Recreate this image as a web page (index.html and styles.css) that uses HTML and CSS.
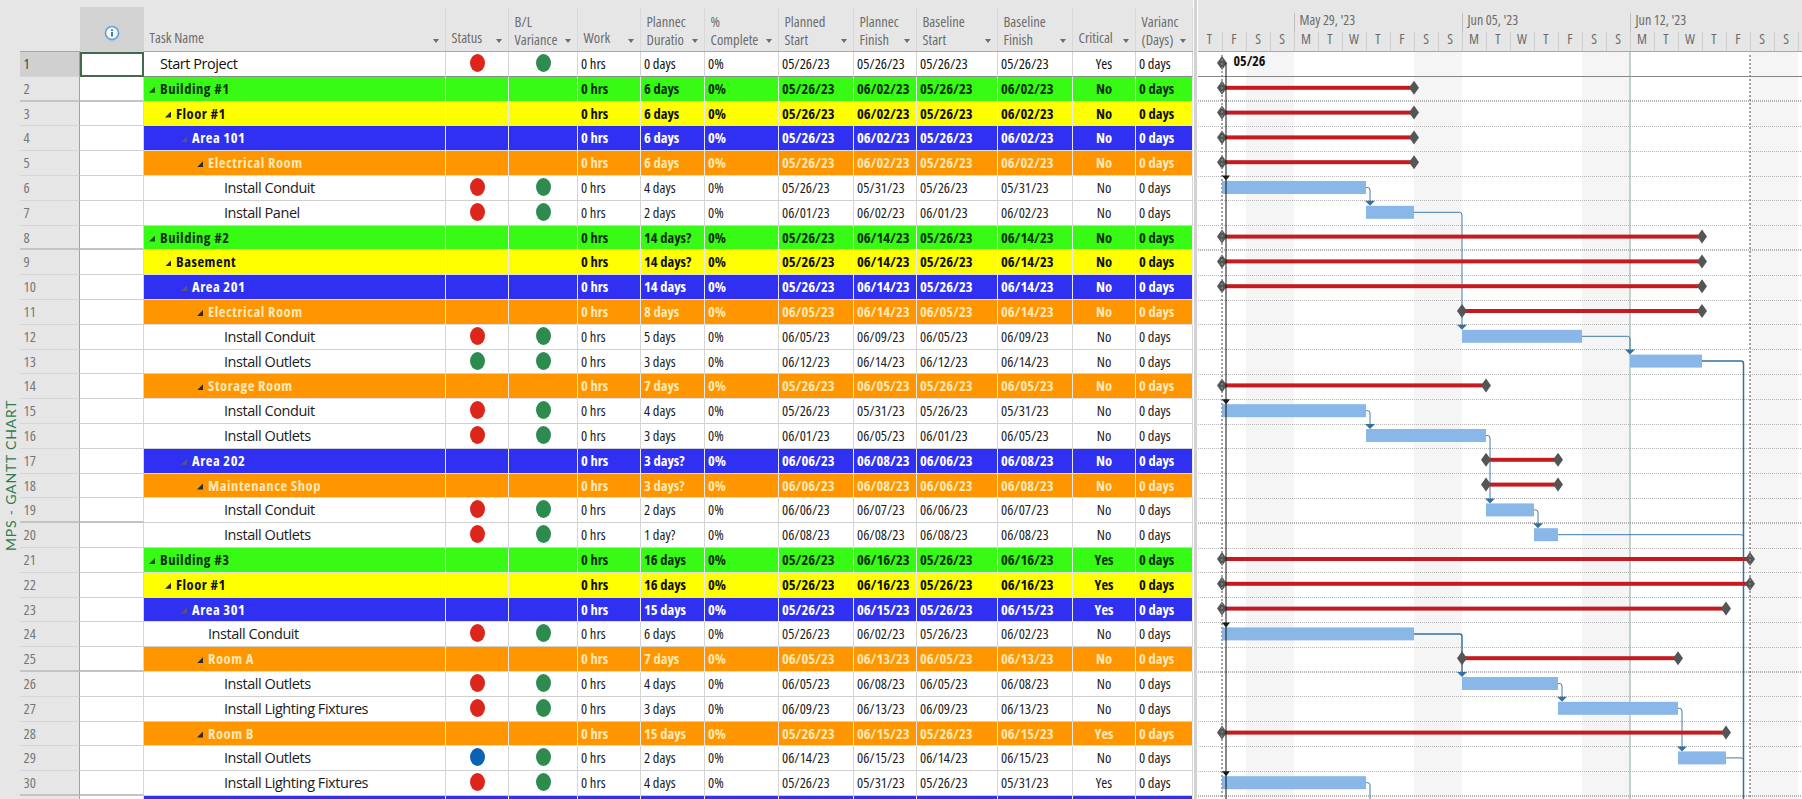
FILE: index.html
```html
<!DOCTYPE html>
<html lang="en">
<head>
<meta charset="utf-8">
<title>MPS - Gantt Chart</title>
<link rel="stylesheet" href="styles.css">
</head>
<body>
<div class="app">
  <div class="side"><span class="side-label">MPS - GANTT CHART</span></div>
  <div class="table">
    <div class="head">
      <div class="hid"></div>
      <div class="hind"><svg class="info" viewBox="0 0 16 18" width="16" height="18"><circle cx="8" cy="8" r="6.5" fill="#f4f9fd" stroke="#5fa3d8" stroke-width="1.6"/><rect x="7.1" y="7" width="1.8" height="4.5" fill="#3a6f9c"/><rect x="7.1" y="4.2" width="1.8" height="1.8" fill="#3a6f9c"/><rect x="5.5" y="15.4" width="5" height="1.2" fill="#9cc4e4"/></svg></div>
      <div class="hc one"><span>Task Name</span><i class="dd"></i></div>
      <div class="hc one"><span>Status</span><i class="dd"></i></div>
      <div class="hc"><span>B/L<br>Variance</span><i class="dd"></i></div>
      <div class="hc one"><span>Work</span><i class="dd"></i></div>
      <div class="hc"><span>Plannec<br>Duratio</span><i class="dd"></i></div>
      <div class="hc"><span>%<br>Complete</span><i class="dd"></i></div>
      <div class="hc"><span>Planned<br>Start</span><i class="dd"></i></div>
      <div class="hc"><span>Plannec<br>Finish</span><i class="dd"></i></div>
      <div class="hc"><span>Baseline<br>Start</span><i class="dd"></i></div>
      <div class="hc"><span>Baseline<br>Finish</span><i class="dd"></i></div>
      <div class="hc one"><span>Critical</span><i class="dd"></i></div>
      <div class="hc"><span>Varianc<br>(Days)</span><i class="dd"></i></div>
    </div>
    <div class="row first"><div class="id">1</div><div class="ind sel"></div><div class="task t1">Start Project</div><div class="dc"><i class="dot r"></i></div><div class="dc"><i class="dot g"></i></div><div>0 hrs</div><div>0 days</div><div>0%</div><div>05/26/23</div><div>05/26/23</div><div>05/26/23</div><div>05/26/23</div><div class="crit">Yes</div><div>0 days</div></div>
    <div class="row green thick"><div class="id">2</div><div class="ind"></div><div class="task s0"><i class="tw"></i>Building #1</div><div></div><div></div><div>0 hrs</div><div>6 days</div><div>0%</div><div>05/26/23</div><div>06/02/23</div><div>05/26/23</div><div>06/02/23</div><div class="crit">No</div><div>0 days</div></div>
    <div class="row yellow"><div class="id">3</div><div class="ind"></div><div class="task s1"><i class="tw"></i>Floor #1</div><div></div><div></div><div>0 hrs</div><div>6 days</div><div>0%</div><div>05/26/23</div><div>06/02/23</div><div>05/26/23</div><div>06/02/23</div><div class="crit">No</div><div>0 days</div></div>
    <div class="row blue"><div class="id">4</div><div class="ind"></div><div class="task s2"><i class="tw"></i>Area 101</div><div></div><div></div><div>0 hrs</div><div>6 days</div><div>0%</div><div>05/26/23</div><div>06/02/23</div><div>05/26/23</div><div>06/02/23</div><div class="crit">No</div><div>0 days</div></div>
    <div class="row orange"><div class="id">5</div><div class="ind"></div><div class="task s3"><i class="tw"></i>Electrical Room</div><div></div><div></div><div>0 hrs</div><div>6 days</div><div>0%</div><div>05/26/23</div><div>06/02/23</div><div>05/26/23</div><div>06/02/23</div><div class="crit">No</div><div>0 days</div></div>
    <div class="row"><div class="id">6</div><div class="ind"></div><div class="task t4">Install Conduit</div><div class="dc"><i class="dot r"></i></div><div class="dc"><i class="dot g"></i></div><div>0 hrs</div><div>4 days</div><div>0%</div><div>05/26/23</div><div>05/31/23</div><div>05/26/23</div><div>05/31/23</div><div class="crit">No</div><div>0 days</div></div>
    <div class="row"><div class="id">7</div><div class="ind"></div><div class="task t4">Install Panel</div><div class="dc"><i class="dot r"></i></div><div class="dc"><i class="dot g"></i></div><div>0 hrs</div><div>2 days</div><div>0%</div><div>06/01/23</div><div>06/02/23</div><div>06/01/23</div><div>06/02/23</div><div class="crit">No</div><div>0 days</div></div>
    <div class="row green thick"><div class="id">8</div><div class="ind"></div><div class="task s0"><i class="tw"></i>Building #2</div><div></div><div></div><div>0 hrs</div><div>14 days?</div><div>0%</div><div>05/26/23</div><div>06/14/23</div><div>05/26/23</div><div>06/14/23</div><div class="crit">No</div><div>0 days</div></div>
    <div class="row yellow"><div class="id">9</div><div class="ind"></div><div class="task s1"><i class="tw"></i>Basement</div><div></div><div></div><div>0 hrs</div><div>14 days?</div><div>0%</div><div>05/26/23</div><div>06/14/23</div><div>05/26/23</div><div>06/14/23</div><div class="crit">No</div><div>0 days</div></div>
    <div class="row blue"><div class="id">10</div><div class="ind"></div><div class="task s2"><i class="tw"></i>Area 201</div><div></div><div></div><div>0 hrs</div><div>14 days</div><div>0%</div><div>05/26/23</div><div>06/14/23</div><div>05/26/23</div><div>06/14/23</div><div class="crit">No</div><div>0 days</div></div>
    <div class="row orange"><div class="id">11</div><div class="ind"></div><div class="task s3"><i class="tw"></i>Electrical Room</div><div></div><div></div><div>0 hrs</div><div>8 days</div><div>0%</div><div>06/05/23</div><div>06/14/23</div><div>06/05/23</div><div>06/14/23</div><div class="crit">No</div><div>0 days</div></div>
    <div class="row"><div class="id">12</div><div class="ind"></div><div class="task t4">Install Conduit</div><div class="dc"><i class="dot r"></i></div><div class="dc"><i class="dot g"></i></div><div>0 hrs</div><div>5 days</div><div>0%</div><div>06/05/23</div><div>06/09/23</div><div>06/05/23</div><div>06/09/23</div><div class="crit">No</div><div>0 days</div></div>
    <div class="row"><div class="id">13</div><div class="ind"></div><div class="task t4">Install Outlets</div><div class="dc"><i class="dot g"></i></div><div class="dc"><i class="dot g"></i></div><div>0 hrs</div><div>3 days</div><div>0%</div><div>06/12/23</div><div>06/14/23</div><div>06/12/23</div><div>06/14/23</div><div class="crit">No</div><div>0 days</div></div>
    <div class="row orange"><div class="id">14</div><div class="ind"></div><div class="task s3"><i class="tw"></i>Storage Room</div><div></div><div></div><div>0 hrs</div><div>7 days</div><div>0%</div><div>05/26/23</div><div>06/05/23</div><div>05/26/23</div><div>06/05/23</div><div class="crit">No</div><div>0 days</div></div>
    <div class="row"><div class="id">15</div><div class="ind"></div><div class="task t4">Install Conduit</div><div class="dc"><i class="dot r"></i></div><div class="dc"><i class="dot g"></i></div><div>0 hrs</div><div>4 days</div><div>0%</div><div>05/26/23</div><div>05/31/23</div><div>05/26/23</div><div>05/31/23</div><div class="crit">No</div><div>0 days</div></div>
    <div class="row"><div class="id">16</div><div class="ind"></div><div class="task t4">Install Outlets</div><div class="dc"><i class="dot r"></i></div><div class="dc"><i class="dot g"></i></div><div>0 hrs</div><div>3 days</div><div>0%</div><div>06/01/23</div><div>06/05/23</div><div>06/01/23</div><div>06/05/23</div><div class="crit">No</div><div>0 days</div></div>
    <div class="row blue"><div class="id">17</div><div class="ind"></div><div class="task s2"><i class="tw"></i>Area 202</div><div></div><div></div><div>0 hrs</div><div>3 days?</div><div>0%</div><div>06/06/23</div><div>06/08/23</div><div>06/06/23</div><div>06/08/23</div><div class="crit">No</div><div>0 days</div></div>
    <div class="row orange"><div class="id">18</div><div class="ind"></div><div class="task s3"><i class="tw"></i>Maintenance Shop</div><div></div><div></div><div>0 hrs</div><div>3 days?</div><div>0%</div><div>06/06/23</div><div>06/08/23</div><div>06/06/23</div><div>06/08/23</div><div class="crit">No</div><div>0 days</div></div>
    <div class="row thick"><div class="id">19</div><div class="ind"></div><div class="task t4">Install Conduit</div><div class="dc"><i class="dot r"></i></div><div class="dc"><i class="dot g"></i></div><div>0 hrs</div><div>2 days</div><div>0%</div><div>06/06/23</div><div>06/07/23</div><div>06/06/23</div><div>06/07/23</div><div class="crit">No</div><div>0 days</div></div>
    <div class="row"><div class="id">20</div><div class="ind"></div><div class="task t4">Install Outlets</div><div class="dc"><i class="dot r"></i></div><div class="dc"><i class="dot g"></i></div><div>0 hrs</div><div>1 day?</div><div>0%</div><div>06/08/23</div><div>06/08/23</div><div>06/08/23</div><div>06/08/23</div><div class="crit">No</div><div>0 days</div></div>
    <div class="row green"><div class="id">21</div><div class="ind"></div><div class="task s0"><i class="tw"></i>Building #3</div><div></div><div></div><div>0 hrs</div><div>16 days</div><div>0%</div><div>05/26/23</div><div>06/16/23</div><div>05/26/23</div><div>06/16/23</div><div class="crit">Yes</div><div>0 days</div></div>
    <div class="row yellow"><div class="id">22</div><div class="ind"></div><div class="task s1"><i class="tw"></i>Floor #1</div><div></div><div></div><div>0 hrs</div><div>16 days</div><div>0%</div><div>05/26/23</div><div>06/16/23</div><div>05/26/23</div><div>06/16/23</div><div class="crit">Yes</div><div>0 days</div></div>
    <div class="row blue"><div class="id">23</div><div class="ind"></div><div class="task s2"><i class="tw"></i>Area 301</div><div></div><div></div><div>0 hrs</div><div>15 days</div><div>0%</div><div>05/26/23</div><div>06/15/23</div><div>05/26/23</div><div>06/15/23</div><div class="crit">Yes</div><div>0 days</div></div>
    <div class="row"><div class="id">24</div><div class="ind"></div><div class="task t3">Install Conduit</div><div class="dc"><i class="dot r"></i></div><div class="dc"><i class="dot g"></i></div><div>0 hrs</div><div>6 days</div><div>0%</div><div>05/26/23</div><div>06/02/23</div><div>05/26/23</div><div>06/02/23</div><div class="crit">No</div><div>0 days</div></div>
    <div class="row orange thick"><div class="id">25</div><div class="ind"></div><div class="task s3"><i class="tw"></i>Room A</div><div></div><div></div><div>0 hrs</div><div>7 days</div><div>0%</div><div>06/05/23</div><div>06/13/23</div><div>06/05/23</div><div>06/13/23</div><div class="crit">No</div><div>0 days</div></div>
    <div class="row"><div class="id">26</div><div class="ind"></div><div class="task t4">Install Outlets</div><div class="dc"><i class="dot r"></i></div><div class="dc"><i class="dot g"></i></div><div>0 hrs</div><div>4 days</div><div>0%</div><div>06/05/23</div><div>06/08/23</div><div>06/05/23</div><div>06/08/23</div><div class="crit">No</div><div>0 days</div></div>
    <div class="row"><div class="id">27</div><div class="ind"></div><div class="task t4">Install Lighting Fixtures</div><div class="dc"><i class="dot r"></i></div><div class="dc"><i class="dot g"></i></div><div>0 hrs</div><div>3 days</div><div>0%</div><div>06/09/23</div><div>06/13/23</div><div>06/09/23</div><div>06/13/23</div><div class="crit">No</div><div>0 days</div></div>
    <div class="row orange"><div class="id">28</div><div class="ind"></div><div class="task s3"><i class="tw"></i>Room B</div><div></div><div></div><div>0 hrs</div><div>15 days</div><div>0%</div><div>05/26/23</div><div>06/15/23</div><div>05/26/23</div><div>06/15/23</div><div class="crit">Yes</div><div>0 days</div></div>
    <div class="row"><div class="id">29</div><div class="ind"></div><div class="task t4">Install Outlets</div><div class="dc"><i class="dot b"></i></div><div class="dc"><i class="dot g"></i></div><div>0 hrs</div><div>2 days</div><div>0%</div><div>06/14/23</div><div>06/15/23</div><div>06/14/23</div><div>06/15/23</div><div class="crit">No</div><div>0 days</div></div>
    <div class="row thick"><div class="id">30</div><div class="ind"></div><div class="task t4">Install Lighting Fixtures</div><div class="dc"><i class="dot r"></i></div><div class="dc"><i class="dot g"></i></div><div>0 hrs</div><div>4 days</div><div>0%</div><div>05/26/23</div><div>05/31/23</div><div>05/26/23</div><div>05/31/23</div><div class="crit">Yes</div><div>0 days</div></div>
    <div class="row blue"><div class="id"></div><div class="ind"></div><div class="task"></div><div></div><div></div><div></div><div></div><div></div><div></div><div></div><div></div><div></div><div></div><div></div></div>
  </div>
  <div class="split"></div>
  <div class="chart">
    <div class="chead">
      <div class="weeks"><div class="wk lead"></div><div class="wk">May 29, '23</div><div class="wk">Jun 05, '23</div><div class="wk">Jun 12, '23</div></div>
      <div class="days"><span>T</span><span>F</span><span>S</span><span>S</span><span>M</span><span>T</span><span>W</span><span>T</span><span>F</span><span>S</span><span>S</span><span>M</span><span>T</span><span>W</span><span>T</span><span>F</span><span>S</span><span>S</span><span>M</span><span>T</span><span>W</span><span>T</span><span>F</span><span>S</span><span>S</span><span></span></div>
    </div>
    <svg class="plot" viewBox="1197.5 52 604.5 747" width="604.5" height="747">
      <defs>
        <polygon id="dia" points="0,-7 5,0 0,7 -5,0"/>
        <polygon id="arr" points="-5,-5 5,-5 0,0"/>
        <polygon id="blk" points="-4,-5 4,-5 0,0"/>
      </defs>
      <rect class="wkend" x="1245.5" y="52" width="48" height="747"/>
      <rect class="wkend" x="1413.5" y="52" width="48" height="747"/>
      <rect class="wkend" x="1581.5" y="52" width="48" height="747"/>
      <rect class="wkend" x="1749.5" y="52" width="48" height="747"/>
      <path class="grid" d="M1197.5 126.5H1802M1197.5 151.5H1802M1197.5 176.5H1802M1197.5 200.5H1802M1197.5 225.5H1802M1197.5 275.5H1802M1197.5 300.5H1802M1197.5 324.5H1802M1197.5 349.5H1802M1197.5 374.5H1802M1197.5 399.5H1802M1197.5 424.5H1802M1197.5 448.5H1802M1197.5 473.5H1802M1197.5 498.5H1802M1197.5 548.5H1802M1197.5 572.5H1802M1197.5 597.5H1802M1197.5 622.5H1802M1197.5 647.5H1802M1197.5 696.5H1802M1197.5 721.5H1802M1197.5 746.5H1802M1197.5 771.5H1802"/>
      <path class="grid heavy" d="M1197.5 101H1802M1197.5 250H1802M1197.5 523H1802M1197.5 672H1802M1197.5 796H1802"/>
      <path class="rule" d="M1197.5 76.5H1802"/>
      <path class="today" d="M1629.5 52V799"/>
      <path class="dots" d="M1221.5 55V799M1749.5 55V799"/>
      <g class="links">
        <path d="M1365.5 187.5H1367Q1369.5 187.5 1369.5 190V201"/>
        <path d="M1413.5 212.3H1459Q1461.5 212.3 1461.5 215V325"/>
        <path d="M1581.5 336.3H1627Q1629.5 336.3 1629.5 339V350"/>
        <path class="strong" d="M1701.5 361.1H1740.5Q1743 361.1 1743 363.5V799"/>
        <path d="M1365.5 410.7H1367Q1369.5 410.7 1369.5 413V425"/>
        <path d="M1485.5 435.5H1487Q1489.5 435.5 1489.5 438V499"/>
        <path d="M1533.5 509.9H1535Q1537.5 509.9 1537.5 512.5V524"/>
        <path d="M1557.5 534.7H1740.5Q1743 534.7 1743 537"/>
        <path class="strong" d="M1413.5 633.9H1459Q1461.5 633.9 1461.5 636.5V673"/>
        <path d="M1557.5 683.5H1559Q1561.5 683.5 1561.5 686V698"/>
        <path d="M1677.5 708.3H1679Q1681.5 708.3 1681.5 711V747"/>
        <path d="M1725.5 757.9H1740.5Q1743 757.9 1743 760"/>
        <path d="M1365.5 782.7H1367Q1369.5 782.7 1369.5 785V799"/>
      </g>
      <g class="arrows">
        <use href="#arr" x="1369.5" y="205.8"/><use href="#arr" x="1461.5" y="329.8"/><use href="#arr" x="1629.5" y="354.6"/><use href="#arr" x="1369.5" y="429"/><use href="#arr" x="1489.5" y="503.4"/><use href="#arr" x="1537.5" y="528.2"/><use href="#arr" x="1461.5" y="677"/><use href="#arr" x="1561.5" y="701.8"/><use href="#arr" x="1681.5" y="751.4"/>
      </g>
      <g class="bars">
        <rect x="1221.5" y="181" width="144" height="13"/><rect x="1365.5" y="205.8" width="48" height="13"/><rect x="1461.5" y="329.8" width="120" height="13"/><rect x="1629.5" y="354.6" width="72" height="13"/><rect x="1221.5" y="404.2" width="144" height="13"/><rect x="1365.5" y="429" width="120" height="13"/><rect x="1485.5" y="503.4" width="48" height="13"/><rect x="1533.5" y="528.2" width="24" height="13"/><rect x="1221.5" y="627.4" width="192" height="13"/><rect x="1461.5" y="677" width="96" height="13"/><rect x="1557.5" y="701.8" width="120" height="13"/><rect x="1677.5" y="751.4" width="48" height="13"/><rect x="1221.5" y="776.2" width="144" height="13"/>
      </g>
      <g class="sums">
        <rect x="1221.5" y="85.8" width="192" height="4"/><rect x="1221.5" y="110.6" width="192" height="4"/><rect x="1221.5" y="135.4" width="192" height="4"/><rect x="1221.5" y="160.2" width="192" height="4"/><rect x="1221.5" y="234.6" width="480" height="4"/><rect x="1221.5" y="259.4" width="480" height="4"/><rect x="1221.5" y="284.2" width="480" height="4"/><rect x="1461.5" y="309" width="240" height="4"/><rect x="1221.5" y="383.4" width="264" height="4"/><rect x="1485.5" y="457.8" width="72" height="4"/><rect x="1485.5" y="482.6" width="72" height="4"/><rect x="1221.5" y="557" width="528" height="4"/><rect x="1221.5" y="581.8" width="528" height="4"/><rect x="1221.5" y="606.6" width="504" height="4"/><rect x="1461.5" y="656.2" width="216" height="4"/><rect x="1221.5" y="730.6" width="504" height="4"/>
      </g>
      <g class="dias">
        <use href="#dia" x="1221.5" y="63"/>
        <use href="#dia" x="1221.5" y="87.8"/><use href="#dia" x="1413.5" y="87.8"/>
        <use href="#dia" x="1221.5" y="112.6"/><use href="#dia" x="1413.5" y="112.6"/>
        <use href="#dia" x="1221.5" y="137.4"/><use href="#dia" x="1413.5" y="137.4"/>
        <use href="#dia" x="1221.5" y="162.2"/><use href="#dia" x="1413.5" y="162.2"/>
        <use href="#dia" x="1221.5" y="236.6"/><use href="#dia" x="1701.5" y="236.6"/>
        <use href="#dia" x="1221.5" y="261.4"/><use href="#dia" x="1701.5" y="261.4"/>
        <use href="#dia" x="1221.5" y="286.2"/><use href="#dia" x="1701.5" y="286.2"/>
        <use href="#dia" x="1461.5" y="311"/><use href="#dia" x="1701.5" y="311"/>
        <use href="#dia" x="1221.5" y="385.4"/><use href="#dia" x="1485.5" y="385.4"/>
        <use href="#dia" x="1485.5" y="459.8"/><use href="#dia" x="1557.5" y="459.8"/>
        <use href="#dia" x="1485.5" y="484.6"/><use href="#dia" x="1557.5" y="484.6"/>
        <use href="#dia" x="1221.5" y="559"/><use href="#dia" x="1749.5" y="559"/>
        <use href="#dia" x="1221.5" y="583.8"/><use href="#dia" x="1749.5" y="583.8"/>
        <use href="#dia" x="1221.5" y="608.6"/><use href="#dia" x="1725.5" y="608.6"/>
        <use href="#dia" x="1461.5" y="658.2"/><use href="#dia" x="1677.5" y="658.2"/>
        <use href="#dia" x="1221.5" y="732.6"/><use href="#dia" x="1725.5" y="732.6"/>
      </g>
      <path class="dots over" d="M1221.5 55V799M1749.5 55V799"/>
      <path class="now" d="M1225.5 63V799"/>
      <g class="blacks">
        <use href="#blk" x="1225.5" y="180.5"/><use href="#blk" x="1225.5" y="404.2"/><use href="#blk" x="1225.5" y="627.4"/><use href="#blk" x="1225.5" y="776.2"/>
      </g>
      <text class="mile" x="1233" y="66">05/26</text>
    </svg>
  </div>
</div>
</body>
</html>
```

FILE: styles.css
```css
* { box-sizing: border-box; }
html, body { margin: 0; padding: 0; background: #fff; }
body { font-family: "Open Sans", "Noto Sans", "Liberation Sans", sans-serif; font-stretch: 75%; font-size: 14.5px; color: #1c1c1c; }

.app { display: flex; width: 1802px; height: 799px; overflow: hidden; }

.side { flex: 0 0 20px; background: #e6e6e6; padding-top: 400px; display: flex; justify-content: center; align-items: flex-start; }
.side-label { writing-mode: vertical-rl; transform: rotate(180deg); color: #2f7d4f; font-family: "Lato", sans-serif; font-size: 14px; font-stretch: normal; letter-spacing: 0.8px; white-space: nowrap; height: 151px; text-align: left; }

.table { flex: 0 0 1173px; display: flex; flex-direction: column; }
.head, .row { display: grid; flex: none; grid-template-columns: 60px 64px 302px 63px 69px 63px 64px 74px 75px 63px 81px 75px 63px 57px; }

.head { height: 52px; padding-top: 7px; background: #e6e6e6; border-bottom: 1px solid #a8a8a8; }
.hind { background: #d2d2d2; display: flex; justify-content: center; padding-top: 18px; margin-bottom: -1px; }
.info { display: block; }
.hc { display: flex; align-items: flex-end; justify-content: space-between; padding: 0 6px 3px 5.5px; border-right: 1px solid #d8d8d8; color: #6c6c6c; line-height: 17.5px; white-space: nowrap; overflow: hidden; }
.hc.one { padding-bottom: 5px; }
.dd { flex: none; width: 0; height: 0; border-left: 3.5px solid transparent; border-right: 3.5px solid transparent; border-top: 4px solid #6c6c6c; margin-bottom: 5px; }
.hc.one .dd { margin-bottom: 3px; }

.row { height: 24.8px; line-height: 24px; }
.row > div { padding-left: 3px; border-right: 1px solid #d6d6d6; border-bottom: 1px solid #d0d0d0; white-space: nowrap; overflow: hidden; }
.row > .id { padding-left: 3.5px; background: #e6e6e6; color: #777; border-right: 1px solid #a0a0a0; border-bottom: 1px solid #d6d6d6; }
.row > .sel { border: 2px solid #3f6b4b; }
.first > .id { background: #d0d0d0; color: #444; }
.first > div { color: #111; border-bottom-color: #8a8a8a; }
.row > .crit { text-align: center; padding-left: 0; }
.row > .dc { display: flex; justify-content: center; align-items: flex-start; padding: 2px 0 0; }
.dot { width: 15px; height: 18px; border-radius: 50%; display: block; }
.dot.r { background: #dc261c; }
.dot.g { background: #2e8b50; }
.dot.b { background: #0b62b5; }

.row > .task { padding-left: 0; font-stretch: 100%; letter-spacing: -0.45px; }
.row > .t1 { padding-left: 16px; }
.row > .t3 { padding-left: 64px; }
.row > .t4 { padding-left: 80px; }
.row > .s0, .row > .s1, .row > .s2, .row > .s3 { font-stretch: 75%; letter-spacing: 0.55px; }
.row > .s0 { padding-left: 5px; }
.row > .s1 { padding-left: 21px; }
.row > .s2 { padding-left: 37px; }
.row > .s3 { padding-left: 53px; }
.tw { display: inline-block; width: 6px; height: 6px; margin-right: 5px; background: #2a2a2a; clip-path: polygon(100% 0, 100% 100%, 0 100%); vertical-align: 1px; }

.thick > .id, .thick > .ind { border-bottom: 2px solid #c4c4c4; }

.green > div:nth-child(n+3), .yellow > div:nth-child(n+3), .blue > div:nth-child(n+3), .orange > div:nth-child(n+3) { font-weight: 700; border-right-color: #e9e9e9; border-bottom-color: #dedede; }
.green > div:nth-child(n+3) { background: #37fb14; color: #0b2f0b; }
.yellow > div:nth-child(n+3) { background: #ffff00; color: #111; }
.blue > div:nth-child(n+3) { background: #3030f2; color: #fff; }
.orange > div:nth-child(n+3) { background: #ff9600; color: #ffe8b8; }
.blue .tw { background: #55557a; }
.green .tw { background: #1f4f1f; }

.split { flex: 0 0 4.5px; background: #d2d2d2; border-left: 1px solid #fff; border-right: 0.5px solid #fff; }

.chart { flex: 0 0 604.5px; display: flex; flex-direction: column; }
.chead { height: 52px; flex: none; background: #e6e6e6; border-bottom: 1px solid #a8a8a8; padding-top: 13px; color: #6c6c6c; overflow: hidden; }
.weeks { display: flex; height: 19px; }
.wk { flex: 0 0 168px; padding-left: 5px; border-left: 1px solid #bdbdbd; line-height: 13px; white-space: nowrap; font-size: 14px; }
.wk.lead { flex: 0 0 96px; border-left: 0; }
.days { display: flex; height: 19px; }
.days span { flex: 0 0 24px; text-align: center; border-left: 1px solid #cfcfcf; line-height: 13px; font-size: 14px; }
.days span:first-child { border-left: 0; }

.plot { display: block; flex: none; }
.wkend { fill: #f5f5f5; }
.grid { fill: none; stroke: #b4b4b4; stroke-width: 1; stroke-dasharray: 1 1; }
.grid.heavy { stroke-width: 2; }
.rule { fill: none; stroke: #858585; stroke-width: 1; }
.today { fill: none; stroke: #8ea89a; stroke-width: 1; }
.dots { fill: none; stroke: #5a5a5a; stroke-width: 1; stroke-dasharray: 2 2; }
.dots.over { stroke: #9a9a9a; }
.now { fill: none; stroke: #111; stroke-width: 1; }
.links path { fill: none; stroke: #3f7aa8; stroke-width: 1; }
.links .strong { stroke-width: 1.5; stroke: #34709f; }
.arrows { fill: #35719f; }
.bars { fill: #88b7e8; }
.sums { fill: #c61a1e; }
.dias { fill: #555; }
.blacks { fill: #1a1a1a; }
.mile { font-size: 14px; font-weight: 700; fill: #111; }
```
